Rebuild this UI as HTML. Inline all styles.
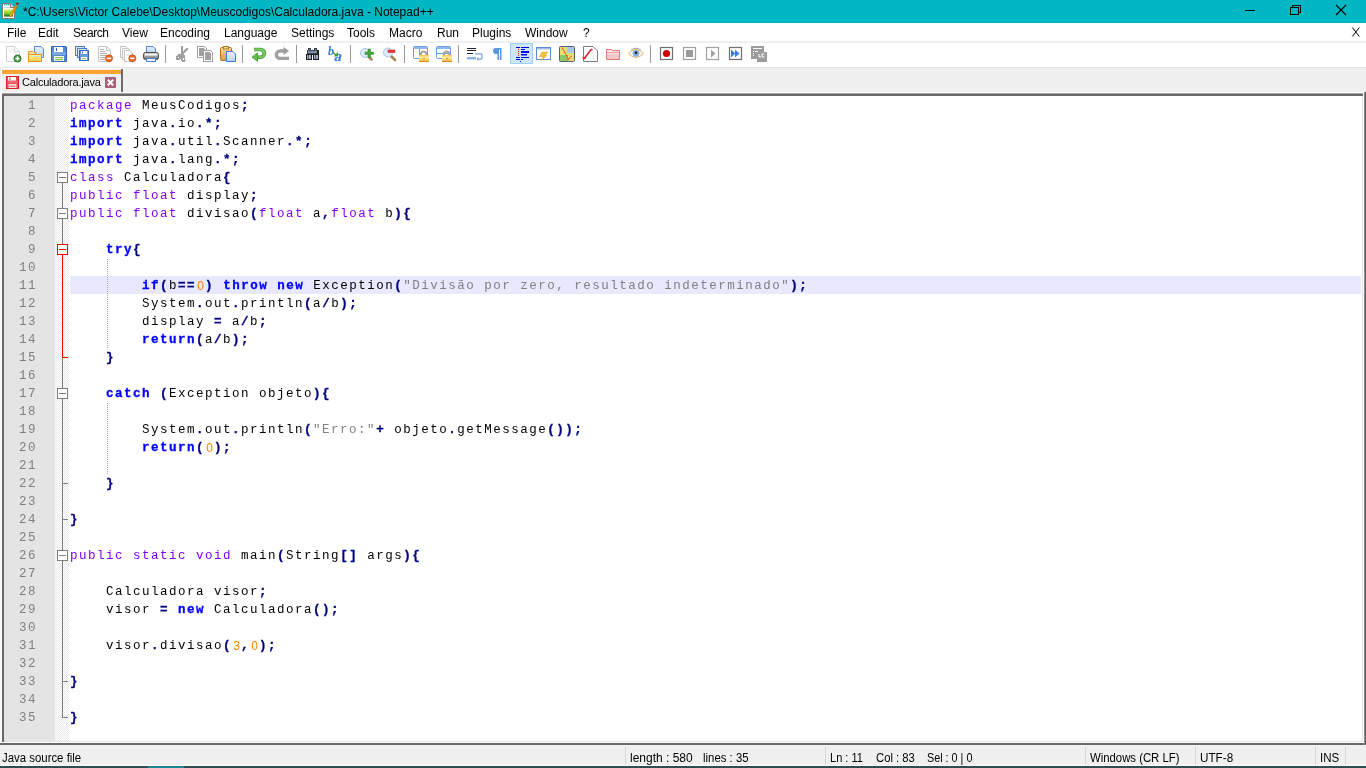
<!DOCTYPE html>
<html><head><meta charset="utf-8">
<style>
*{margin:0;padding:0;box-sizing:border-box}
html,body{width:1366px;height:768px;overflow:hidden;background:#F0F0F0;position:relative}
body{font-family:"Liberation Sans",sans-serif;font-size:12px;color:#000}
.a{position:absolute}
#title{left:0;top:0;width:1366px;height:23px;background:#00B7C3}
#title .tx{left:23px;top:5px;font-size:12px;line-height:14px;white-space:nowrap}
#menu{left:0;top:23px;width:1366px;height:18px;background:#fff}
#menu span{position:absolute;top:3px;line-height:14px;white-space:nowrap}
#mline{left:0;top:41px;width:1366px;height:2px;background:#F0F0F0}
#tool{left:0;top:43px;width:1366px;height:24px;background:#fff}
#tline{left:0;top:67px;width:1366px;height:1px;background:#E3E3E3}
.ic{position:absolute;top:3px;width:16px;height:16px}
.sep{position:absolute;top:3px;width:1px;height:18px;background:#A0A0A0}
#tabbar{left:0;top:68px;width:1366px;height:26px;background:#F0F0F0}
#tab{left:2px;top:1px;width:121px;height:25px;background:#F0F0F0;border-right:2px solid #6E6E6E}
#tabor{left:0;top:1px;width:119px;height:4px;background:#F9A535}
#tabtx{left:20px;top:7px;font-size:11px;line-height:13px;letter-spacing:-0.2px;white-space:nowrap}
#ed{left:0;top:94px;width:1366px;height:651px;background:#fff}
.bd{position:absolute}
#lnm{left:4px;top:96px;width:51px;height:645px;background:#E4E4E4}
#fold{left:55px;top:96px;width:14px;height:645px;
 background-color:#fff;
 background-image:linear-gradient(45deg,#E9E9E9 25%,transparent 25%,transparent 75%,#E9E9E9 75%),linear-gradient(45deg,#E9E9E9 25%,transparent 25%,transparent 75%,#E9E9E9 75%);
 background-size:2px 2px;background-position:0 0,1px 1px}
#cur{left:70px;top:276px;width:1291px;height:18px;background:#E8E8FF}
.ln,.nm{position:absolute;font-family:"Liberation Mono",monospace;font-size:12.5px;letter-spacing:1.5px;line-height:18px;height:18px;white-space:pre;margin-top:1px}
.ln{left:70px}
.nm{left:4px;width:33px;text-align:right;color:#808080;margin-top:1px !important}
.ln i,.ln b{font-style:normal;font-weight:normal}
.ln .k{color:#0000FF;font-weight:bold;-webkit-text-stroke:0.3px #0000FF}
.ln .t{color:#8000FF}
.ln .o{color:#000080;font-weight:bold;-webkit-text-stroke:0.3px #000080}
.ln .n{color:#FF8000;display:inline-block;width:9px;text-align:center;letter-spacing:0;font-family:"Liberation Sans",sans-serif;font-size:12px;vertical-align:top}
.ln .s{color:#808080}
#status{left:0;top:745px;width:1366px;height:21px;background:#F0F0F0}
#status span{position:absolute;top:6px;line-height:14px;white-space:nowrap;transform-origin:0 0}
.ssep{position:absolute;top:2px;width:1px;height:19px;background:#D7D7D7}
#task{left:0;top:766px;width:1366px;height:2px;background:#2D4D52}
#root{position:absolute;left:0;top:0;width:1366px;height:768px;overflow:hidden;will-change:transform;background:#F0F0F0}
</style></head><body><div id=root>
<div id=title class=a>
 <svg class=a style="left:0;top:0" width="24" height="23" viewBox="0 0 24 23">
 <defs><linearGradient id="npg" x1="0" y1="0" x2="0" y2="1"><stop offset="0" stop-color="#E8F060"/><stop offset="0.6" stop-color="#70D030"/><stop offset="1" stop-color="#106010"/></linearGradient>
 <linearGradient id="pen" x1="0" y1="0" x2="1" y2="0"><stop offset="0" stop-color="#F8C000"/><stop offset="1" stop-color="#E08000"/></linearGradient></defs>
 <path d="M2.5 3.5H10.5L14.5 7.5V18.5H2.5Z" fill="#FFF" stroke="#8C7670"/>
 <path d="M10.5 3.5V7.5H14.5" fill="#DDD" stroke="#8C7670"/>
 <rect x="4" y="4" width="1.5" height="1.5" fill="#38B8C8"/><rect x="6" y="4" width="1.5" height="1.5" fill="#38B8C8"/><rect x="8" y="4" width="1.5" height="1.5" fill="#38B8C8"/>
 <rect x="4" y="7" width="6" height="1" fill="#C8D0D8"/>
 <rect x="4" y="9.5" width="9" height="7" fill="url(#npg)"/>
 <path d="M10.2 17.2L9.8 14.6L15.6 5.4L17.6 6.6L11.8 15.8Z" fill="url(#pen)" stroke="#B86A00" stroke-width="0.6"/>
 <path d="M15.6 5.4L16.4 4.1L18.4 5.3L17.6 6.6Z" fill="#7A8AA0"/>
 <rect x="16.3" y="2.6" width="2.2" height="2.2" fill="#C80010" transform="rotate(30 17.4 3.7)"/>
</svg>
 <svg class=a style="left:1240px;top:0" width="126" height="23" viewBox="1240 0 126 23" shape-rendering="crispEdges">
  <rect x="1245" y="10" width="10" height="1" fill="#000"/>
  <path d="M1290.5 7.5H1298.5V14.5H1290.5Z M1292.5 7.5V5.5H1300.5V12.5H1298.5" fill="none" stroke="#000"/>
 </svg>
 <svg class=a style="left:1330px;top:0" width="24" height="23" viewBox="1330 0 24 23">
  <path d="M1336 5L1346 15M1346 5L1336 15" stroke="#000" stroke-width="1.1"/>
 </svg>
 <div class="a tx">*C:\Users\Victor Calebe\Desktop\Meuscodigos\Calculadora.java - Notepad++</div>
</div>
<div id=menu class=a>
 <span style="left:7px">File</span>
 <span style="left:38px">Edit</span>
 <span style="left:73px;letter-spacing:-0.4px">Search</span>
 <span style="left:122px">View</span>
 <span style="left:160px">Encoding</span>
 <span style="left:224px">Language</span>
 <span style="left:291px">Settings</span>
 <span style="left:347px">Tools</span>
 <span style="left:389px">Macro</span>
 <span style="left:437px">Run</span>
 <span style="left:472px">Plugins</span>
 <span style="left:525px">Window</span>
 <span style="left:583px">?</span>
 <svg class=a style="left:1348px;top:0" width="16" height="18" viewBox="1348 23 16 18"><path d="M1352.3 27.5L1359.3 36.5M1359.3 27.5L1352.3 36.5" stroke="#000" stroke-width="1"/></svg>
</div>
<div id=mline class=a></div>
<div id=tool class=a>
<svg class=a style="left:0;top:0" width="800" height="24" viewBox="0 43 800 24">
<defs>
<linearGradient id="gY" x1="0" y1="0" x2="0" y2="1"><stop offset="0" stop-color="#FFF3B0"/><stop offset="1" stop-color="#F5CC3C"/></linearGradient>
<linearGradient id="gB" x1="0" y1="0" x2="0" y2="1"><stop offset="0" stop-color="#EAF2FD"/><stop offset="1" stop-color="#B9D3F6"/></linearGradient>
<linearGradient id="gP" x1="0" y1="0" x2="0" y2="1"><stop offset="0" stop-color="#E0E0E0"/><stop offset="0.5" stop-color="#A8A8A8"/><stop offset="1" stop-color="#606060"/></linearGradient>
<linearGradient id="gO" x1="0" y1="0" x2="0" y2="1"><stop offset="0" stop-color="#F3D9A0"/><stop offset="1" stop-color="#D99A3A"/></linearGradient>
<linearGradient id="gG" x1="0" y1="0" x2="0" y2="1"><stop offset="0" stop-color="#F0C040"/><stop offset="0.3" stop-color="#FFF0A0"/><stop offset="1" stop-color="#F0B030"/></linearGradient>
</defs>
<!-- separators -->
<g fill="#9A9A9A">
<rect x="165" y="45" width="1" height="18"/>
<rect x="242" y="45" width="1" height="18"/>
<rect x="296" y="45" width="1" height="18"/>
<rect x="350" y="45" width="1" height="18"/>
<rect x="404" y="45" width="1" height="18"/>
<rect x="458" y="45" width="1" height="18"/>
<rect x="650" y="45" width="1" height="18"/>
</g>
<!-- active button -->
<rect x="510.5" y="43.5" width="22" height="20" fill="#CCE8FF" stroke="#99D1FF"/>

<!-- 1 new -->
<g transform="translate(5,46)">
<path d="M1.5 0.5H9.5L14.5 5.5V15.5H1.5Z" fill="#FFF" stroke="#CFCFCF"/>
<path d="M9.5 0.5V5.5H14.5" fill="#F6F6F6" stroke="#D8D8D8"/>
<path d="M3 3H8M4 5H9M8 7H12" stroke="#EEEEEE"/>
<circle cx="12.5" cy="12.5" r="3.6" fill="#3A963A" stroke="#1F6E1F" stroke-width="0.8"/>
<rect x="11.8" y="10.3" width="1.5" height="4.4" fill="#FFF"/>
<rect x="10.3" y="11.8" width="4.4" height="1.5" fill="#FFF"/>
</g>
<!-- 2 open -->
<g transform="translate(28,46)">
<path d="M6.5 0.5H13L15.5 3V11.5H6.5Z" fill="url(#gB)" stroke="#4F86D4"/>
<path d="M0.5 15.5V5.5H5L6 6.5H8V8.5" fill="#F7E3A8" stroke="#E5952C"/>
<rect x="0.5" y="8.5" width="13" height="7" fill="url(#gY)" stroke="#E5952C"/>
<path d="M6 10.5H12" stroke="#C9D6E6"/>
</g>
<!-- 3 save -->
<g transform="translate(51,46)">
<path d="M0.5 0.5H15L15.5 1V15.5H0.5Z" fill="#5588D8" stroke="#3567BD"/>
<rect x="3" y="1" width="9" height="5" fill="#FFF"/>
<rect x="5" y="2" width="1" height="3" fill="#3567BD"/>
<rect x="1.5" y="6" width="13" height="3" fill="#7FA6E4"/>
<rect x="3" y="10" width="10" height="5" fill="#FFF"/>
<rect x="4" y="11" width="8" height="1.3" fill="#8CC65A"/>
<rect x="4" y="13" width="8" height="1.3" fill="#8CC65A"/>
</g>
<!-- 4 save all -->
<g transform="translate(74,46)">
<rect x="1.5" y="0.5" width="9" height="9" fill="#DCE8FA" stroke="#4A7DD0"/>
<rect x="3.5" y="2.5" width="9" height="9" fill="#DCE8FA" stroke="#4A7DD0"/>
<rect x="5.5" y="4.5" width="9" height="10" fill="#6C98DC" stroke="#3567BD"/>
<rect x="7" y="5" width="6" height="3" fill="#FFF"/>
<rect x="8" y="5.5" width="1" height="2" fill="#3567BD"/>
<rect x="7" y="11" width="6" height="3" fill="#FFF"/>
<rect x="8" y="12" width="4" height="1.2" fill="#8CC65A"/>
</g>
<!-- 5 close -->
<g transform="translate(97,46)">
<path d="M1.5 0.5H9.5L13.5 4.5V15.5H1.5Z" fill="#FFF" stroke="#C4C4C4"/>
<path d="M9.5 0.5V4.5H13.5" fill="none" stroke="#C4C4C4"/>
<path d="M3 3.5H7M3 5.5H8M3 7.5H10M3 9.5H9M3 11.5H8M3 13.5H8" stroke="#9A9A9A" stroke-width="0.8"/>
<circle cx="12" cy="12.3" r="3.5" fill="#EF6A20" stroke="#C94A10" stroke-width="0.8"/>
<rect x="9.8" y="11.6" width="4.4" height="1.5" fill="#FFF"/>
</g>
<!-- 6 close all -->
<g transform="translate(120,46)">
<path d="M0.5 0.5H6L8.5 3V11.5H0.5Z" fill="#FFF" stroke="#C4C4C4"/>
<path d="M2.5 2.5H8L10.5 5V13.5H2.5Z" fill="#FFF" stroke="#C4C4C4"/>
<path d="M4.5 4.5H10L12.5 7V15.5H4.5Z" fill="#FFF" stroke="#C4C4C4"/>
<path d="M6 9H9" stroke="#DDD"/>
<circle cx="12.3" cy="12.3" r="3.5" fill="#EF6A20" stroke="#C94A10" stroke-width="0.8"/>
<rect x="10.1" y="11.6" width="4.4" height="1.5" fill="#FFF"/>
</g>
<!-- 7 print -->
<g transform="translate(143,46)">
<path d="M3.5 0.5H10L12.5 3V6.5H3.5Z" fill="url(#gB)" stroke="#4F86D4"/>
<rect x="0.5" y="6.5" width="15" height="7" rx="2" fill="url(#gP)" stroke="#4A4A4A"/>
<rect x="2" y="8" width="12" height="1.5" fill="#F2F2F2"/>
<rect x="3.5" y="12.5" width="9" height="3" fill="#EEF4FC" stroke="#4F86D4"/>
</g>
<!-- 8 cut (disabled) -->
<g transform="translate(172,45)" fill="#A0A0A0" shape-rendering="crispEdges">
<rect x="9" y="1" width="2" height="9"/>
<rect x="14" y="3" width="2" height="2"/>
<rect x="13" y="4" width="2" height="2"/>
<rect x="12" y="5" width="2" height="2"/>
<rect x="11" y="6" width="2" height="2"/>
<rect x="10" y="7" width="2" height="2"/>
<rect x="6" y="9" width="6" height="1"/>
<rect x="5" y="10" width="8" height="1"/>
<rect x="4" y="11" width="9" height="4"/>
<rect x="9" y="15" width="5" height="1"/>
<rect x="10" y="16" width="3" height="1"/>
<rect x="6" y="12" width="1" height="1" fill="#FFF"/>
<rect x="11" y="13" width="1" height="2" fill="#FFF"/>
<rect x="8" y="14" width="1" height="1" fill="#FFF"/>
<rect x="4" y="14" width="0" height="1"/>
</g>
<!-- 9 copy (disabled) -->
<g transform="translate(197,46)" shape-rendering="crispEdges">
<path d="M0.5 0.5H7.5L9.5 2.5V11.5H0.5Z" fill="#FFF" stroke="#A0A0A0"/>
<path d="M2 2H6L8 4V10H2Z" fill="#A0A0A0"/>
<path d="M6.5 4.5H13.5L15.5 6.5V15.5H6.5Z" fill="#FFF" stroke="#A0A0A0"/>
<path d="M8 6H12L14 8V14H8Z" fill="#A0A0A0"/>
</g>
<!-- 10 paste -->
<g transform="translate(220,46)">
<rect x="0.5" y="1.5" width="11" height="13" rx="1" fill="url(#gO)" stroke="#B77320"/>
<rect x="3.5" y="0.5" width="5" height="2.5" fill="#FFE08A" stroke="#B77320"/>
<path d="M6.5 5.5H13L15.5 8V15.5H6.5Z" fill="url(#gB)" stroke="#3F7BD6"/>
</g>
<!-- 11 undo -->
<g transform="translate(251,46)">
<path d="M3 3.5H9.5A3.8 3.8 0 0 1 9.5 11.2H5" fill="none" stroke="#3E9A32" stroke-width="3.6" stroke-linecap="butt"/>
<path d="M3 3.5H9.5A3.8 3.8 0 0 1 9.5 11.2H5" fill="none" stroke="#7CCB5E" stroke-width="2"/>
<path d="M6.5 7L1 11.2L6.5 15.2Z" fill="#6CC050" stroke="#3E9A32" stroke-width="0.9" stroke-linejoin="round"/>
</g>
<!-- 12 redo -->
<g transform="translate(274,46)">
<path d="M11 5H6A3.6 3.6 0 0 0 6 12.4H15" fill="none" stroke="#A0A0A0" stroke-width="3.4"/>
<path d="M9.5 1L15.2 5L9.5 9Z" fill="#A0A0A0"/>
</g>
<!-- 13 find -->
<g transform="translate(306,48)" shape-rendering="crispEdges">
<rect x="2" y="0" width="3" height="3" fill="#3A4048"/>
<rect x="8" y="0" width="3" height="3" fill="#3A4048"/>
<rect x="3" y="1" width="1" height="2" fill="#7888A0"/>
<rect x="9" y="1" width="1" height="2" fill="#7888A0"/>
<rect x="1" y="2" width="12" height="4" fill="#3E4856"/>
<rect x="2" y="3" width="9" height="2" fill="#7C8CA4"/>
<rect x="11" y="2" width="2" height="4" fill="#1A1E22"/>
<rect x="0" y="6" width="6" height="6" fill="#1A1E22"/>
<rect x="7" y="6" width="6" height="6" fill="#1A1E22"/>
<rect x="1" y="7" width="4" height="4" fill="#A8B4C4"/>
<rect x="8" y="7" width="4" height="4" fill="#A8B4C4"/>
<rect x="2" y="7" width="1" height="4" fill="#505A68"/>
<rect x="9" y="7" width="1" height="4" fill="#505A68"/>
<rect x="6" y="6" width="1" height="1" fill="#1A1E22"/>
</g>
<!-- 14 replace -->
<g transform="translate(328,46)">
<text x="0" y="8.5" font-family="Liberation Serif" font-style="italic" font-weight="bold" font-size="12" fill="#3A7AE0">b</text>
<g transform="translate(4.5,15.2) skewX(-14)"><text x="1" y="0" font-family="Liberation Serif" font-weight="bold" font-size="15" fill="#3A7AE0">a</text></g>
<path d="M4.5 6L8.5 9.5" stroke="#3FA03F" stroke-width="1.5" fill="none"/>
<path d="M10 10.5L5.5 10.5L10 6Z" fill="#3FA03F"/>
</g>
<!-- 15 zoom in -->
<g transform="translate(359,46)">
<path d="M9.5 10.5L12.5 13.5" stroke="#B08050" stroke-width="2.6" stroke-linecap="round"/>
<circle cx="6" cy="7" r="4.5" fill="#DDEBFA" stroke="#A9C4E6"/>
<path d="M9 3H11.5V6H14.5V8.5H11.5V11.5H9V8.5H6V6H9Z" fill="#45A83F" stroke="#2A7A2A" stroke-width="0.5"/>
</g>
<!-- 16 zoom out -->
<g transform="translate(382,46)">
<path d="M9 10L13 14" stroke="#B08050" stroke-width="2.6" stroke-linecap="round"/>
<circle cx="6" cy="6.5" r="4.5" fill="#DDEBFA" stroke="#A9C4E6"/>
<rect x="6" y="4" width="7" height="2.6" fill="#F0383A" stroke="#C02020" stroke-width="0.5"/>
</g>
<!-- 17 sync v -->
<g transform="translate(413,46)">
<rect x="0.5" y="0.5" width="14" height="12" rx="1" fill="#FFF" stroke="#6A9CE0"/>
<rect x="1" y="1" width="13" height="2" fill="#8EB8EE"/>
<path d="M6.5 3V12.5" stroke="#6A9CE0"/>
<path d="M8 9.5V8A2.6 2.6 0 0 1 13.2 8V9.5" fill="none" stroke="#A4A4A4" stroke-width="2"/>
<rect x="6" y="9" width="10" height="7" fill="url(#gG)"/>
<rect x="6" y="15" width="10" height="1" fill="#E08A20"/>
<rect x="10.5" y="11.5" width="1" height="2" fill="#B88830"/>
</g>
<!-- 18 sync h -->
<g transform="translate(436,46)">
<rect x="0.5" y="0.5" width="14" height="12" rx="1" fill="#FFF" stroke="#6A9CE0"/>
<rect x="1" y="1" width="13" height="2" fill="#8EB8EE"/>
<path d="M1 7.5H14" stroke="#6A9CE0"/>
<path d="M8 9.5V8A2.6 2.6 0 0 1 13.2 8V9.5" fill="none" stroke="#A4A4A4" stroke-width="2"/>
<rect x="6" y="9" width="10" height="7" fill="url(#gG)"/>
<rect x="6" y="15" width="10" height="1" fill="#E08A20"/>
<rect x="10.5" y="11.5" width="1" height="2" fill="#B88830"/>
</g>
<!-- 19 wrap -->
<g transform="translate(467,46)">
<rect x="0" y="2" width="9" height="1" fill="#222"/>
<rect x="0" y="4" width="9" height="1" fill="#222"/>
<rect x="0" y="7" width="6" height="1" fill="#222"/>
<path d="M8 8H15V13H12" fill="none" stroke="#5A8FD8"/>
<path d="M11.5 11V15L9.5 13Z" fill="#5A8FD8"/>
<rect x="0" y="11" width="9" height="2.5" fill="#8EB6EC"/>
</g>
<!-- 20 pilcrow -->
<g transform="translate(490,46)">
<path d="M6 2H11.5V14H10V3.5H9V14H7.5V8H6A3 3 0 0 1 6 2Z" fill="#5A95E0"/>
</g>
<!-- 21 indent guide -->
<g transform="translate(513,46)">
<rect x="3" y="1" width="4" height="1" fill="#0000F0"/>
<rect x="8" y="1" width="8" height="1" fill="#0000F0"/>
<rect x="8" y="3" width="4" height="1" fill="#0000F0"/>
<rect x="8" y="5" width="8" height="2" fill="#0000F0"/>
<rect x="8" y="8" width="6" height="1.5" fill="#0000F0"/>
<rect x="3" y="11" width="4" height="1" fill="#0000F0"/>
<rect x="8" y="11" width="8" height="1" fill="#0000F0"/>
<rect x="3" y="13" width="4" height="1" fill="#0000F0"/>
<rect x="8" y="13" width="2" height="1" fill="#0000F0"/>
<rect x="7" y="15" width="1" height="1" fill="#0000F0"/>
<rect x="5" y="3" width="1" height="1" fill="#F00"/>
<rect x="5" y="5" width="1" height="1" fill="#F00"/>
<rect x="5" y="7" width="1" height="1" fill="#F00"/>
<rect x="5" y="9" width="1" height="1" fill="#F00"/>
</g>
<!-- 22 udl -->
<g transform="translate(536,46)">
<rect x="0.5" y="1.5" width="14" height="12" fill="#FFF" stroke="#5D8FD8"/>
<rect x="1" y="2" width="13" height="1.5" fill="#9DC0EE"/>
<path d="M6 6H12L8.5 9H11L5 15L7 10.5H3.5Z" fill="#F2C23C" stroke="#D9A020" stroke-width="0.5"/>
</g>
<!-- 23 doc map -->
<g transform="translate(559,46)">
<rect x="0.5" y="0.5" width="15" height="15" rx="1" fill="#E6E070" stroke="#5A5A70"/>
<rect x="8" y="1" width="7" height="6" fill="#A8C8E8"/>
<rect x="1" y="9" width="8" height="6" fill="#8CC86A"/>
<path d="M3 1.5L10 14M13 10L8 14" stroke="#F0503A" stroke-width="1"/>
</g>
<!-- 24 function list -->
<g transform="translate(582,46)">
<path d="M1.5 0.5H11L15.5 5V15.5H1.5Z" fill="#FFF" stroke="#7A7A7A"/>
<path d="M2 13L8 5A1.5 1.5 0 0 1 10.5 4" fill="none" stroke="#E82030" stroke-width="1.6"/>
<path d="M0.5 12H4" stroke="#E82030" stroke-width="1.6"/>
<path d="M10.5 7.5V8M12 9.5V10.5M11.5 12V13" stroke="#BBB"/>
</g>
<!-- 25 folder -->
<g transform="translate(605,46)">
<path d="M1.5 3.5H6.5L7.5 4.5H14.5V13.5H1.5Z" fill="#FBE8E8" stroke="#E07878"/>
<path d="M2 6.5H14" stroke="#E8A0A0"/>
<rect x="2" y="8" width="12" height="5" fill="#F4C8C8"/>
</g>
<!-- 26 eye -->
<g transform="translate(628,46)">
<path d="M0.5 7.5Q8 -0.5 15.5 7.5Q8 15.5 0.5 7.5Z" fill="#FFF" stroke="#E0B060"/>
<path d="M3 4Q8 0.5 13 4" fill="none" stroke="#A0A0A0" stroke-width="1"/>
<circle cx="8" cy="7.3" r="3.4" fill="#86AEE0"/>
<circle cx="8" cy="6.8" r="1.3" fill="#101828"/>
</g>
<!-- 27 record -->
<g transform="translate(659,46)">
<rect x="1.5" y="1.5" width="12" height="12" fill="#FFF" stroke="#707070" stroke-width="1.2"/>
<circle cx="7.5" cy="7.5" r="3.6" fill="#D00000"/>
</g>
<!-- 28 stop -->
<g transform="translate(682,46)">
<rect x="1.5" y="1.5" width="12" height="12" fill="#FFF" stroke="#A0A0A0" stroke-width="1.2"/>
<rect x="4" y="4" width="7" height="7" fill="#9A9A9A"/>
</g>
<!-- 29 play -->
<g transform="translate(705,46)">
<rect x="1.5" y="1.5" width="12" height="12" fill="#FFF" stroke="#A0A0A0" stroke-width="1.2"/>
<path d="M6 3.5L10.5 7.5L6 11.5Z" fill="#A0A0A0"/>
</g>
<!-- 30 play multi -->
<g transform="translate(728,46)">
<rect x="1.5" y="1.5" width="12" height="12" fill="#FFF" stroke="#707070" stroke-width="1.2"/>
<path d="M3 3.5L7.5 7.5L3 11.5Z M7 3.5L11.5 7.5L7 11.5Z" fill="#3F7FE0"/>
</g>
<!-- 31 save macro -->
<g transform="translate(751,46)">
<rect x="0" y="0" width="13" height="13" fill="#9C9C9C"/>
<rect x="2" y="2" width="9" height="1" fill="#FFF"/>
<rect x="2" y="5" width="1" height="1" fill="#FFF"/><rect x="4" y="5" width="3" height="1" fill="#FFF"/>
<rect x="2" y="7" width="1" height="1" fill="#FFF"/>
<rect x="2" y="9" width="1" height="1" fill="#FFF"/>
<rect x="6" y="6" width="10" height="10" fill="#9C9C9C" stroke="#FFF" stroke-width="0"/>
<path d="M8 8V11H10M11 8V11H13.5M13.5 8H11" stroke="#FFF" stroke-width="1" fill="none"/>
</g>
</svg>

</div>
<div id=tline class=a></div>
<div id=tabbar class=a>
 <div class=a style="left:1px;top:0;width:1px;height:26px;background:#FFF"></div><div class=a style="left:1px;top:0;width:121px;height:1px;background:#FFF"></div>
 <div id=tab class=a>
  <div id=tabor class=a></div>
  <svg class=a style="left:4px;top:7px" width="13" height="13" viewBox="0 0 13 13">
   <rect x="0.5" y="0.5" width="12" height="12" fill="#F04850" stroke="#D82028"/>
   <rect x="2" y="1" width="8" height="3.5" fill="#FFF"/>
   <rect x="3.5" y="1.5" width="1" height="2.5" fill="#E83038"/>
   <rect x="1.5" y="5" width="10" height="2.2" fill="#F46870"/>
   <rect x="2.5" y="8" width="8" height="4" fill="#FCE0E2"/>
   <rect x="3.5" y="9.5" width="6" height="1.5" fill="#E88088"/>
  </svg>
  <div id=tabtx class=a>Calculadora.java</div>
  <svg class=a style="left:103px;top:8px" width="11" height="11" viewBox="0 0 11 11">
   <rect x="0" y="0" width="11" height="11" rx="0.8" fill="#A8607A"/>
   <path d="M2.8 2.8L8.2 8.2M8.2 2.8L2.8 8.2" stroke="#FFF" stroke-width="2"/>
  </svg>
 </div>
</div>
<div id=ed class=a></div>
<div id=lnm class=a></div>
<div id=fold class=a></div>
<div id=cur class=a></div>
<svg class=a style="left:0;top:0" width="1366" height="768" viewBox="0 0 1366 768" shape-rendering="crispEdges"><rect x="57.5" y="172.5" width="10" height="10" fill="#FFF" stroke="#808080"/><rect x="59" y="177" width="7" height="1" fill="#808080"/><rect x="62" y="183" width="1" height="3" fill="#808080"/><rect x="62" y="186" width="1" height="18" fill="#808080"/><rect x="62" y="204" width="1" height="4" fill="#808080"/><rect x="57.5" y="208.5" width="10" height="10" fill="#FFF" stroke="#808080"/><rect x="59" y="213" width="7" height="1" fill="#808080"/><rect x="62" y="219" width="1" height="3" fill="#808080"/><rect x="62" y="222" width="1" height="18" fill="#808080"/><rect x="62" y="240" width="1" height="4" fill="#808080"/><rect x="57.5" y="244.5" width="10" height="10" fill="#FFF" stroke="#FF0000"/><rect x="59" y="249" width="7" height="1" fill="#FF0000"/><rect x="62" y="255" width="1" height="3" fill="#FF0000"/><rect x="62" y="258" width="1" height="18" fill="#FF0000"/><rect x="62" y="276" width="1" height="18" fill="#FF0000"/><rect x="62" y="294" width="1" height="18" fill="#FF0000"/><rect x="62" y="312" width="1" height="18" fill="#FF0000"/><rect x="62" y="330" width="1" height="18" fill="#FF0000"/><rect x="62" y="348" width="1" height="10" fill="#FF0000"/><rect x="62" y="357" width="6" height="1" fill="#FF0000"/><rect x="62" y="358" width="1" height="8" fill="#808080"/><rect x="62" y="366" width="1" height="18" fill="#808080"/><rect x="62" y="384" width="1" height="4" fill="#808080"/><rect x="57.5" y="388.5" width="10" height="10" fill="#FFF" stroke="#808080"/><rect x="59" y="393" width="7" height="1" fill="#808080"/><rect x="62" y="399" width="1" height="3" fill="#808080"/><rect x="62" y="402" width="1" height="18" fill="#808080"/><rect x="62" y="420" width="1" height="18" fill="#808080"/><rect x="62" y="438" width="1" height="18" fill="#808080"/><rect x="62" y="456" width="1" height="18" fill="#808080"/><rect x="62" y="474" width="1" height="10" fill="#808080"/><rect x="62" y="483" width="6" height="1" fill="#808080"/><rect x="62" y="484" width="1" height="8" fill="#808080"/><rect x="62" y="492" width="1" height="18" fill="#808080"/><rect x="62" y="510" width="1" height="10" fill="#808080"/><rect x="62" y="519" width="6" height="1" fill="#808080"/><rect x="62" y="520" width="1" height="8" fill="#808080"/><rect x="62" y="528" width="1" height="18" fill="#808080"/><rect x="62" y="546" width="1" height="4" fill="#808080"/><rect x="57.5" y="550.5" width="10" height="10" fill="#FFF" stroke="#808080"/><rect x="59" y="555" width="7" height="1" fill="#808080"/><rect x="62" y="561" width="1" height="3" fill="#808080"/><rect x="62" y="564" width="1" height="18" fill="#808080"/><rect x="62" y="582" width="1" height="18" fill="#808080"/><rect x="62" y="600" width="1" height="18" fill="#808080"/><rect x="62" y="618" width="1" height="18" fill="#808080"/><rect x="62" y="636" width="1" height="18" fill="#808080"/><rect x="62" y="654" width="1" height="18" fill="#808080"/><rect x="62" y="672" width="1" height="10" fill="#808080"/><rect x="62" y="681" width="6" height="1" fill="#808080"/><rect x="62" y="682" width="1" height="8" fill="#808080"/><rect x="62" y="690" width="1" height="18" fill="#808080"/><rect x="62" y="708" width="1" height="10" fill="#808080"/><rect x="62" y="717" width="6" height="1" fill="#808080"/><rect x="107" y="259" width="1" height="1" fill="#A8A8A8"/><rect x="107" y="261" width="1" height="1" fill="#A8A8A8"/><rect x="107" y="263" width="1" height="1" fill="#A8A8A8"/><rect x="107" y="265" width="1" height="1" fill="#A8A8A8"/><rect x="107" y="267" width="1" height="1" fill="#A8A8A8"/><rect x="107" y="269" width="1" height="1" fill="#A8A8A8"/><rect x="107" y="271" width="1" height="1" fill="#A8A8A8"/><rect x="107" y="273" width="1" height="1" fill="#A8A8A8"/><rect x="107" y="275" width="1" height="1" fill="#A8A8A8"/><rect x="107" y="277" width="1" height="1" fill="#A8A8A8"/><rect x="107" y="279" width="1" height="1" fill="#A8A8A8"/><rect x="107" y="281" width="1" height="1" fill="#A8A8A8"/><rect x="107" y="283" width="1" height="1" fill="#A8A8A8"/><rect x="107" y="285" width="1" height="1" fill="#A8A8A8"/><rect x="107" y="287" width="1" height="1" fill="#A8A8A8"/><rect x="107" y="289" width="1" height="1" fill="#A8A8A8"/><rect x="107" y="291" width="1" height="1" fill="#A8A8A8"/><rect x="107" y="293" width="1" height="1" fill="#A8A8A8"/><rect x="107" y="295" width="1" height="1" fill="#A8A8A8"/><rect x="107" y="297" width="1" height="1" fill="#A8A8A8"/><rect x="107" y="299" width="1" height="1" fill="#A8A8A8"/><rect x="107" y="301" width="1" height="1" fill="#A8A8A8"/><rect x="107" y="303" width="1" height="1" fill="#A8A8A8"/><rect x="107" y="305" width="1" height="1" fill="#A8A8A8"/><rect x="107" y="307" width="1" height="1" fill="#A8A8A8"/><rect x="107" y="309" width="1" height="1" fill="#A8A8A8"/><rect x="107" y="311" width="1" height="1" fill="#A8A8A8"/><rect x="107" y="313" width="1" height="1" fill="#A8A8A8"/><rect x="107" y="315" width="1" height="1" fill="#A8A8A8"/><rect x="107" y="317" width="1" height="1" fill="#A8A8A8"/><rect x="107" y="319" width="1" height="1" fill="#A8A8A8"/><rect x="107" y="321" width="1" height="1" fill="#A8A8A8"/><rect x="107" y="323" width="1" height="1" fill="#A8A8A8"/><rect x="107" y="325" width="1" height="1" fill="#A8A8A8"/><rect x="107" y="327" width="1" height="1" fill="#A8A8A8"/><rect x="107" y="329" width="1" height="1" fill="#A8A8A8"/><rect x="107" y="331" width="1" height="1" fill="#A8A8A8"/><rect x="107" y="333" width="1" height="1" fill="#A8A8A8"/><rect x="107" y="335" width="1" height="1" fill="#A8A8A8"/><rect x="107" y="337" width="1" height="1" fill="#A8A8A8"/><rect x="107" y="339" width="1" height="1" fill="#A8A8A8"/><rect x="107" y="341" width="1" height="1" fill="#A8A8A8"/><rect x="107" y="343" width="1" height="1" fill="#A8A8A8"/><rect x="107" y="345" width="1" height="1" fill="#A8A8A8"/><rect x="107" y="347" width="1" height="1" fill="#A8A8A8"/><rect x="107" y="403" width="1" height="1" fill="#A8A8A8"/><rect x="107" y="405" width="1" height="1" fill="#A8A8A8"/><rect x="107" y="407" width="1" height="1" fill="#A8A8A8"/><rect x="107" y="409" width="1" height="1" fill="#A8A8A8"/><rect x="107" y="411" width="1" height="1" fill="#A8A8A8"/><rect x="107" y="413" width="1" height="1" fill="#A8A8A8"/><rect x="107" y="415" width="1" height="1" fill="#A8A8A8"/><rect x="107" y="417" width="1" height="1" fill="#A8A8A8"/><rect x="107" y="419" width="1" height="1" fill="#A8A8A8"/><rect x="107" y="421" width="1" height="1" fill="#A8A8A8"/><rect x="107" y="423" width="1" height="1" fill="#A8A8A8"/><rect x="107" y="425" width="1" height="1" fill="#A8A8A8"/><rect x="107" y="427" width="1" height="1" fill="#A8A8A8"/><rect x="107" y="429" width="1" height="1" fill="#A8A8A8"/><rect x="107" y="431" width="1" height="1" fill="#A8A8A8"/><rect x="107" y="433" width="1" height="1" fill="#A8A8A8"/><rect x="107" y="435" width="1" height="1" fill="#A8A8A8"/><rect x="107" y="437" width="1" height="1" fill="#A8A8A8"/><rect x="107" y="439" width="1" height="1" fill="#A8A8A8"/><rect x="107" y="441" width="1" height="1" fill="#A8A8A8"/><rect x="107" y="443" width="1" height="1" fill="#A8A8A8"/><rect x="107" y="445" width="1" height="1" fill="#A8A8A8"/><rect x="107" y="447" width="1" height="1" fill="#A8A8A8"/><rect x="107" y="449" width="1" height="1" fill="#A8A8A8"/><rect x="107" y="451" width="1" height="1" fill="#A8A8A8"/><rect x="107" y="453" width="1" height="1" fill="#A8A8A8"/><rect x="107" y="455" width="1" height="1" fill="#A8A8A8"/><rect x="107" y="457" width="1" height="1" fill="#A8A8A8"/><rect x="107" y="459" width="1" height="1" fill="#A8A8A8"/><rect x="107" y="461" width="1" height="1" fill="#A8A8A8"/><rect x="107" y="463" width="1" height="1" fill="#A8A8A8"/><rect x="107" y="465" width="1" height="1" fill="#A8A8A8"/><rect x="107" y="467" width="1" height="1" fill="#A8A8A8"/><rect x="107" y="469" width="1" height="1" fill="#A8A8A8"/><rect x="107" y="471" width="1" height="1" fill="#A8A8A8"/><rect x="107" y="473" width="1" height="1" fill="#A8A8A8"/></svg>
<div class=nm style="top:96px">1</div>
<div class=nm style="top:114px">2</div>
<div class=nm style="top:132px">3</div>
<div class=nm style="top:150px">4</div>
<div class=nm style="top:168px">5</div>
<div class=nm style="top:186px">6</div>
<div class=nm style="top:204px">7</div>
<div class=nm style="top:222px">8</div>
<div class=nm style="top:240px">9</div>
<div class=nm style="top:258px">10</div>
<div class=nm style="top:276px">11</div>
<div class=nm style="top:294px">12</div>
<div class=nm style="top:312px">13</div>
<div class=nm style="top:330px">14</div>
<div class=nm style="top:348px">15</div>
<div class=nm style="top:366px">16</div>
<div class=nm style="top:384px">17</div>
<div class=nm style="top:402px">18</div>
<div class=nm style="top:420px">19</div>
<div class=nm style="top:438px">20</div>
<div class=nm style="top:456px">21</div>
<div class=nm style="top:474px">22</div>
<div class=nm style="top:492px">23</div>
<div class=nm style="top:510px">24</div>
<div class=nm style="top:528px">25</div>
<div class=nm style="top:546px">26</div>
<div class=nm style="top:564px">27</div>
<div class=nm style="top:582px">28</div>
<div class=nm style="top:600px">29</div>
<div class=nm style="top:618px">30</div>
<div class=nm style="top:636px">31</div>
<div class=nm style="top:654px">32</div>
<div class=nm style="top:672px">33</div>
<div class=nm style="top:690px">34</div>
<div class=nm style="top:708px">35</div>
<div class=ln style="top:96px"><i class=t>package</i> MeusCodigos<b class=o>;</b></div>
<div class=ln style="top:114px"><b class=k>import</b> java<b class=o>.</b>io<b class=o>.</b><b class=o>*</b><b class=o>;</b></div>
<div class=ln style="top:132px"><b class=k>import</b> java<b class=o>.</b>util<b class=o>.</b>Scanner<b class=o>.</b><b class=o>*</b><b class=o>;</b></div>
<div class=ln style="top:150px"><b class=k>import</b> java<b class=o>.</b>lang<b class=o>.</b><b class=o>*</b><b class=o>;</b></div>
<div class=ln style="top:168px"><i class=t>class</i> Calculadora<b class=o>{</b></div>
<div class=ln style="top:186px"><i class=t>public</i> <i class=t>float</i> display<b class=o>;</b></div>
<div class=ln style="top:204px"><i class=t>public</i> <i class=t>float</i> divisao<b class=o>(</b><i class=t>float</i> a<b class=o>,</b><i class=t>float</i> b<b class=o>)</b><b class=o>{</b></div>
<div class=ln style="top:222px"></div>
<div class=ln style="top:240px">    <b class=k>try</b><b class=o>{</b></div>
<div class=ln style="top:258px"></div>
<div class=ln style="top:276px">        <b class=k>if</b><b class=o>(</b>b<b class=o>=</b><b class=o>=</b><i class=n>0</i><b class=o>)</b> <b class=k>throw</b> <b class=k>new</b> Exception<b class=o>(</b><i class=s>&quot;Divisão por zero, resultado indeterminado&quot;</i><b class=o>)</b><b class=o>;</b></div>
<div class=ln style="top:294px">        System<b class=o>.</b>out<b class=o>.</b>println<b class=o>(</b>a<b class=o>/</b>b<b class=o>)</b><b class=o>;</b></div>
<div class=ln style="top:312px">        display <b class=o>=</b> a<b class=o>/</b>b<b class=o>;</b></div>
<div class=ln style="top:330px">        <b class=k>return</b><b class=o>(</b>a<b class=o>/</b>b<b class=o>)</b><b class=o>;</b></div>
<div class=ln style="top:348px">    <b class=o>}</b></div>
<div class=ln style="top:366px"></div>
<div class=ln style="top:384px">    <b class=k>catch</b> <b class=o>(</b>Exception objeto<b class=o>)</b><b class=o>{</b></div>
<div class=ln style="top:402px"></div>
<div class=ln style="top:420px">        System<b class=o>.</b>out<b class=o>.</b>println<b class=o>(</b><i class=s>&quot;Erro:&quot;</i><b class=o>+</b> objeto<b class=o>.</b>getMessage<b class=o>(</b><b class=o>)</b><b class=o>)</b><b class=o>;</b></div>
<div class=ln style="top:438px">        <b class=k>return</b><b class=o>(</b><i class=n>0</i><b class=o>)</b><b class=o>;</b></div>
<div class=ln style="top:456px"></div>
<div class=ln style="top:474px">    <b class=o>}</b></div>
<div class=ln style="top:492px"></div>
<div class=ln style="top:510px"><b class=o>}</b></div>
<div class=ln style="top:528px"></div>
<div class=ln style="top:546px"><i class=t>public</i> <i class=t>static</i> <i class=t>void</i> main<b class=o>(</b>String<b class=o>[</b><b class=o>]</b> args<b class=o>)</b><b class=o>{</b></div>
<div class=ln style="top:564px"></div>
<div class=ln style="top:582px">    Calculadora visor<b class=o>;</b></div>
<div class=ln style="top:600px">    visor <b class=o>=</b> <b class=k>new</b> Calculadora<b class=o>(</b><b class=o>)</b><b class=o>;</b></div>
<div class=ln style="top:618px"></div>
<div class=ln style="top:636px">    visor<b class=o>.</b>divisao<b class=o>(</b><i class=n>3</i><b class=o>,</b><i class=n>0</i><b class=o>)</b><b class=o>;</b></div>
<div class=ln style="top:654px"></div>
<div class=ln style="top:672px"><b class=o>}</b></div>
<div class=ln style="top:690px"></div>
<div class=ln style="top:708px"><b class=o>}</b></div>
<div class=bd style="left:0;top:92px;width:1364px;height:1px;background:#FFF"></div>
<div class=bd style="left:2px;top:93px;width:1361px;height:1px;background:#A8A8A8"></div>
<div class=bd style="left:2px;top:94px;width:1361px;height:2px;background:#696969"></div>
<div class=bd style="left:2px;top:94px;width:2px;height:648px;background:#696969"></div>
<div class=bd style="left:0;top:92px;width:2px;height:651px;background:#FAFAFA"></div>
<div class=bd style="left:1362px;top:96px;width:1px;height:646px;background:#E3E3E3"></div>
<div class=bd style="left:4px;top:741px;width:1359px;height:1px;background:#E3E3E3"></div>
<div class=bd style="left:1363px;top:92px;width:1px;height:651px;background:#FFF"></div>
<div class=bd style="left:2px;top:742px;width:1362px;height:1px;background:#FFF"></div>
<div class=bd style="left:0;top:743px;width:1366px;height:2px;background:#696969"></div>
<div class=bd style="left:1364px;top:92px;width:2px;height:653px;background:linear-gradient(90deg,#8C8C8C 50%,#5E5E5E 50%)"></div>
<div id=status class=a>
 <span style="left:2px;transform:scaleX(0.95)">Java source file</span>
 <div class=ssep style="left:625px"></div>
 <span style="left:630px">length : 580</span>
 <span style="left:703px;transform:scaleX(0.95)">lines : 35</span>
 <div class=ssep style="left:825px"></div>
 <span style="left:830px;transform:scaleX(0.92)">Ln : 11</span>
 <span style="left:876px;transform:scaleX(0.94)">Col : 83</span>
 <span style="left:927px;transform:scaleX(0.9)">Sel : 0 | 0</span>
 <div class=ssep style="left:1085px"></div>
 <span style="left:1090px;transform:scaleX(0.945)">Windows (CR LF)</span>
 <div class=ssep style="left:1195px"></div>
 <span style="left:1200px;transform:scaleX(0.975)">UTF-8</span>
 <div class=ssep style="left:1315px"></div>
 <span style="left:1320px;transform:scaleX(0.96)">INS</span>
 <div class=ssep style="left:1345px"></div>
</div>
<div class=a style="left:0;top:765px;width:1366px;height:1px;background:#FFF"></div>
<div id=task class=a></div>
<div class=a style="left:148px;top:766px;width:36px;height:2px;background:#1A8893"></div>
</div></body></html>
